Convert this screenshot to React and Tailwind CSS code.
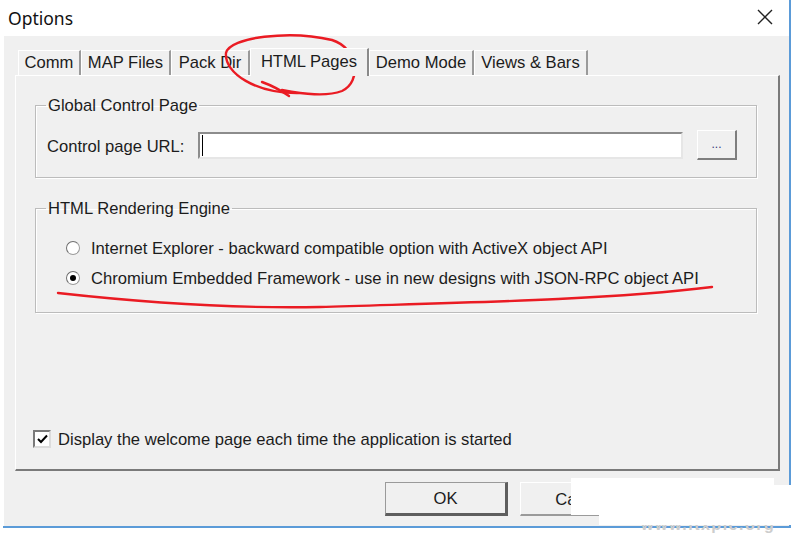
import React from 'react';

const tabs = [
  { label: 'Comm', w: 'w-[63px]' },
  { label: 'MAP Files', w: 'w-[90px]' },
  { label: 'Pack Dir', w: 'w-[79px]' },
  { label: 'HTML Pages', w: 'w-[119px]', active: true },
  { label: 'Demo Mode', w: 'w-[105px]' },
  { label: 'Views & Bars', w: 'w-[114px]' },
];

const Tab = ({ label, w, active }) =>
  active ? (
    <div className={`${w} h-[28px] -mb-px z-10 flex items-center justify-center bg-[#f0f0f0] border-l border-t border-white border-r-2 border-r-[#8a8a8a] pb-[1px]`}>
      {label}
    </div>
  ) : (
    <div className={`${w} h-[25px] flex items-center justify-center border-l border-t border-white border-r-2 border-r-[#9a9a9a]`}>
      {label}
    </div>
  );

const Radio = ({ checked, children }) => (
  <div className="flex items-center h-[18px]">
    <div className="w-[14px] h-[14px] rounded-full bg-white border border-[#9a9a9a] border-t-[#6f6f6f] border-l-[#6f6f6f] flex items-center justify-center">
      {checked && <div className="w-[6px] h-[6px] rounded-full bg-black" />}
    </div>
    <span className="ml-[11px] pt-[1px]">{children}</span>
  </div>
);

const App = () => {
  return (
    <div className="relative w-[800px] h-[538px] bg-white overflow-hidden font-['Liberation_Sans',Arial,sans-serif] text-[16.6px] leading-[18px] text-[#1c1c1c]">
      <div className="ml-[3px] w-[788px] h-[528px] border-r-2 border-b-2 border-[#5b9bd8] flex flex-col">
        {/* title bar */}
        <div className="h-[36px] bg-white flex items-center justify-between pl-[5px] pr-[16px]">
          <span className="text-[17.5px] leading-[22px] text-[#111] font-['Noto_Sans',sans-serif]">Options</span>
          <svg width="16" height="16" viewBox="0 0 16 16" className="-mt-[3px]">
            <path d="M1 1 L15 15 M15 1 L1 15" stroke="#222" strokeWidth="1.4" />
          </svg>
        </div>

        {/* body */}
        <div className="flex-1 bg-[#f0f0f0] ml-[1px] pl-[11px] pt-[12px]">
          <div className="flex items-end h-[27px] ml-[3px]">
            {tabs.map((t) => (
              <Tab key={t.label} {...t} />
            ))}
          </div>

          <div className="w-[765px] h-[396px] border-l border-t border-white border-r-2 border-b-2 border-r-[#7a7a7a] border-b-[#7a7a7a] flex flex-col">
            <fieldset className="ml-[19px] mt-[19px] w-[722px] border border-[#bcbcbc] shadow-[inset_1px_1px_0_#fff,1px_1px_0_#fff]">
              <legend className="ml-[10px] px-[2px] pt-[2px]">Global Control Page</legend>
              <div className="flex items-center pl-[11px] pt-[15px] pb-[17px]">
                <span className="w-[151px] pt-[3px]">Control page URL:</span>
                <div className="w-[485px] h-[27px] bg-white border-2 border-t-[#8c8c8c] border-l-[#8c8c8c] border-r-[#e6e6e6] border-b-[#e6e6e6] flex items-center">
                  <div className="w-px h-[21px] bg-black ml-[2px]" />
                </div>
                <div className="ml-[14px] w-[40px] h-[30px] flex items-end justify-center pb-[9px] border-l border-t border-white border-r-2 border-b-2 border-r-[#7e7e7e] border-b-[#7e7e7e] text-[12px] leading-[10px] text-[#3a3a7a]">
                  ...
                </div>
              </div>
            </fieldset>

            <fieldset className="ml-[19px] mt-[20px] w-[722px] border border-[#bcbcbc] shadow-[inset_1px_1px_0_#fff,1px_1px_0_#fff]">
              <legend className="ml-[10px] px-[2px] pt-[2px]">HTML Rendering Engine</legend>
              <div className="flex flex-col gap-[12px] pl-[30px] pt-[21px] pb-[25px]">
                <Radio>Internet Explorer - backward compatible option with ActiveX object API</Radio>
                <Radio checked>Chromium Embedded Framework - use in new designs with JSON-RPC object API</Radio>
              </div>
            </fieldset>

            <div className="flex items-center ml-[17px] mt-[115px]">
              <div className="w-[18px] h-[18px] bg-white border-2 border-t-[#7a7a7a] border-l-[#7a7a7a] border-r-[#dcdcdc] border-b-[#dcdcdc] flex items-center justify-center">
                <svg width="11" height="10" viewBox="0 0 11 10">
                  <path d="M1 5 L4 8 L10 1.5" stroke="#000" strokeWidth="2" fill="none" />
                </svg>
              </div>
              <span className="ml-[7px] pt-[3px]">Display the welcome page each time the application is started</span>
            </div>
          </div>

          <div className="flex gap-[12px] ml-[370px] mt-[11px]">
            <div className="w-[123px] h-[34px] flex items-center justify-center pt-[2px] border border-[#9a9a9a] border-r-[3px] border-b-[3px] border-r-[#5e5e5e] border-b-[#5e5e5e]">
              OK
            </div>
            <div className="w-[123px] h-[34px] flex items-center justify-center pt-[2px] border-l border-t border-white border-r-2 border-b-2 border-r-[#9a9a9a] border-b-[#9a9a9a]">
              Cancel
            </div>
          </div>
        </div>
      </div>

      {/* watermark + white patches over the corner */}
      <div className="absolute left-[641px] top-[516px] text-[16px] font-bold tracking-[1.5px] text-[#cdcdcd]">www.itxpic.org</div>
      <div className="absolute left-[571px] top-[478px] w-[203px] h-[37px] bg-white" />
      <div className="absolute left-[599px] top-[485px] w-[192px] h-[40px] bg-white" />

      {/* red annotations */}
      <svg className="absolute inset-0 pointer-events-none" width="800" height="538" viewBox="0 0 800 538">
        <g stroke="#ea1b23" strokeWidth="2.4" fill="none" strokeLinecap="round">
          <path d="M262 82 Q276 87 289 96" />
          <path d="M300 93 C256 94 224 73 226 53 C229 37 290 30 332 40 C358 48 362 82 342 91 C326 97 304 94 282 90" />
          <path d="M58 293 C130 301 220 309 320 307 C440 303 600 301 712 287" />
        </g>
      </svg>
    </div>
  );
};

export default App;
